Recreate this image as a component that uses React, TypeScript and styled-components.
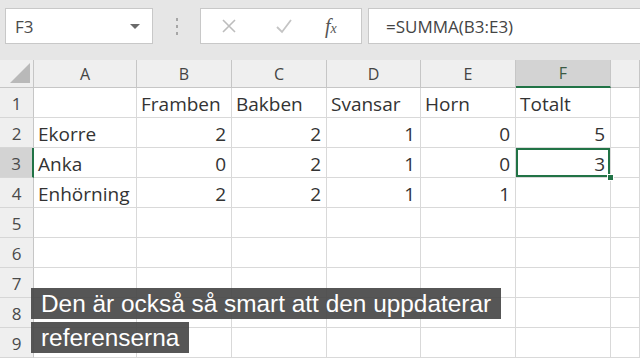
import styled, { createGlobalStyle } from "styled-components";

const GlobalStyle = createGlobalStyle`
  html, body {
    margin: 0;
    padding: 0;
    background: #ffffff;
    overflow: hidden;
  }
  * {
    box-sizing: border-box;
  }
`;

const columns = ["A", "B", "C", "D", "E", "F", ""];
const selectedCol = 5;
const selectedRow = 3;

type Cell = { text: string; num?: boolean };

const data: Cell[][] = [
  [{ text: "" }, { text: "Framben" }, { text: "Bakben" }, { text: "Svansar" }, { text: "Horn" }, { text: "Totalt" }],
  [{ text: "Ekorre" }, { text: "2", num: true }, { text: "2", num: true }, { text: "1", num: true }, { text: "0", num: true }, { text: "5", num: true }],
  [{ text: "Anka" }, { text: "0", num: true }, { text: "2", num: true }, { text: "1", num: true }, { text: "0", num: true }, { text: "3", num: true }],
  [{ text: "Enhörning" }, { text: "2", num: true }, { text: "2", num: true }, { text: "1", num: true }, { text: "1", num: true }, { text: "" }],
];

const rowCount = 9;

export default function App() {
  return (
    <Page>
      <GlobalStyle />
      <FormulaBar>
        <NameBox>
          <span>F3</span>
          <DropArrow />
        </NameBox>
        <Grip>
          <i />
          <i />
          <i />
        </Grip>
        <ButtonBox>
          <ToolIcon>
            <svg width="16" height="16" viewBox="0 0 16 16">
              <path d="M2 2 L14 14 M14 2 L2 14" stroke="#bdbdbd" strokeWidth="1.6" fill="none" />
            </svg>
          </ToolIcon>
          <ToolIcon>
            <svg width="18" height="16" viewBox="0 0 18 16">
              <path d="M2 9 L7 14 L16 2" stroke="#c4c4c4" strokeWidth="1.8" fill="none" />
            </svg>
          </ToolIcon>
          <FxLabel>
            f<sub>x</sub>
          </FxLabel>
        </ButtonBox>
        <FormulaInput>=SUMMA(B3:E3)</FormulaInput>
      </FormulaBar>

      <Sheet>
        <Corner>
          <svg width="22" height="22" viewBox="0 0 22 22">
            <path d="M21 1 L21 21 L1 21 Z" fill="#b9b9b9" />
          </svg>
        </Corner>
        {columns.map((c, i) => (
          <ColHeader key={c + i} $active={i === selectedCol}>
            {c}
          </ColHeader>
        ))}
        {Array.from({ length: rowCount }, (_, r) => {
          const rowNum = r + 1;
          const rowData = data[r] || [];
          return [
            <RowHeader key={"h" + rowNum} $active={rowNum === selectedRow}>
              {rowNum}
            </RowHeader>,
            ...columns.map((_, ci) => {
              const cell = rowData[ci];
              const selected = rowNum === selectedRow && ci === selectedCol;
              return (
                <GridCell key={rowNum + "-" + ci} $num={!!cell?.num} $selected={selected}>
                  {cell?.text}
                  {selected && <FillHandle />}
                </GridCell>
              );
            }),
          ];
        })}
        <Subtitles>
          <SubLine>Den är också så smart att den uppdaterar</SubLine>
          <SubLine>referenserna</SubLine>
        </Subtitles>
      </Sheet>
    </Page>
  );
}

const Page = styled.div`
  width: 640px;
  height: 360px;
  overflow: hidden;
  display: flex;
  flex-direction: column;
  background: #ffffff;
`;

const FormulaBar = styled.div`
  height: 60px;
  flex-shrink: 0;
  display: flex;
  align-items: flex-start;
  padding: 8px 0 0 5px;
  background: #e6e6e6;
  font-family: "Open Sans", "Liberation Sans", sans-serif;
`;

const NameBox = styled.div`
  width: 148px;
  height: 36px;
  display: flex;
  align-items: center;
  justify-content: space-between;
  padding: 0 12px 0 9px;
  background: #ffffff;
  border: 1px solid #c8c8c8;
  font-size: 17px;
  color: #4a4a4a;
`;

const DropArrow = styled.span`
  width: 0;
  height: 0;
  border-left: 5px solid transparent;
  border-right: 5px solid transparent;
  border-top: 5px solid #6a6a6a;
`;

const Grip = styled.div`
  width: 47px;
  height: 36px;
  display: flex;
  flex-direction: column;
  align-items: center;
  justify-content: center;
  gap: 4px;

  i {
    width: 2px;
    height: 3px;
    background: #a6a6a6;
  }
`;

const ButtonBox = styled.div`
  width: 162px;
  height: 36px;
  display: flex;
  align-items: center;
  padding-left: 20px;
  gap: 36px;
  background: #ffffff;
  border: 1px solid #c8c8c8;
`;

const ToolIcon = styled.span`
  display: flex;
  align-items: center;
  width: 18px;
`;

const FxLabel = styled.span`
  font-family: "Liberation Serif", serif;
  font-style: italic;
  font-size: 20px;
  color: #555555;
  margin-left: -4px;

  sub {
    font-size: 14px;
    vertical-align: baseline;
  }
`;

const FormulaInput = styled.div`
  flex: 1;
  height: 36px;
  margin-left: 6px;
  display: flex;
  align-items: center;
  padding-left: 17px;
  background: #ffffff;
  border: 1px solid #c8c8c8;
  border-right: none;
  font-size: 17px;
  color: #444444;
`;

const Sheet = styled.div`
  position: relative;
  flex: 1;
  display: grid;
  grid-template-columns: 34px 103px 95px 95px 94px 95px 95px 1fr;
  grid-template-rows: 28px repeat(9, 30px) 1fr;
  font-family: "Open Sans", "Liberation Sans", sans-serif;
`;

const Corner = styled.div`
  display: flex;
  align-items: flex-end;
  justify-content: flex-end;
  padding: 0 2px 3px 0;
  background: #efefef;
  border-right: 1px solid #c6c6c6;
  border-bottom: 1px solid #c6c6c6;
`;

const ColHeader = styled.div<{ $active: boolean }>`
  display: flex;
  align-items: center;
  justify-content: center;
  background: ${({ $active }) => ($active ? "#d3d3d3" : "#efefef")};
  border-right: 1px solid #c6c6c6;
  border-bottom: ${({ $active }) => ($active ? "2px solid #217346" : "1px solid #c6c6c6")};
  font-size: 16px;
  color: ${({ $active }) => ($active ? "#3a5a44" : "#444444")};
`;

const RowHeader = styled.div<{ $active: boolean }>`
  display: flex;
  align-items: center;
  justify-content: center;
  padding-top: 2px;
  background: ${({ $active }) => ($active ? "#d3d3d3" : "#efefef")};
  border-right: ${({ $active }) => ($active ? "2px solid #217346" : "1px solid #c6c6c6")};
  border-bottom: 1px solid #d6d6d6;
  font-size: 17px;
  color: #4a4a4a;
`;

const GridCell = styled.div<{ $num: boolean; $selected: boolean }>`
  position: relative;
  display: flex;
  align-items: center;
  justify-content: ${({ $num }) => ($num ? "flex-end" : "flex-start")};
  padding: 3px 5px 0 4px;
  border-right: 1px solid #d9d9d9;
  border-bottom: 1px solid #d9d9d9;
  font-size: 19px;
  color: #333333;
  white-space: nowrap;
  box-shadow: ${({ $selected }) => ($selected ? "inset 0 0 0 2px #217346" : "none")};
`;

const FillHandle = styled.span`
  position: absolute;
  right: -4px;
  bottom: -4px;
  width: 7px;
  height: 7px;
  background: #217346;
  border: 1px solid #ffffff;
  z-index: 2;
`;

const Subtitles = styled.div`
  position: absolute;
  left: 31px;
  top: 228px;
  display: flex;
  flex-direction: column;
  align-items: flex-start;
  gap: 3px;
  z-index: 3;
`;

const SubLine = styled.div`
  height: 31px;
  display: flex;
  align-items: center;
  padding: 0 10px;
  background: rgba(72, 72, 72, 0.92);
  color: #ffffff;
  font-family: "Liberation Sans", Arial, sans-serif;
  font-size: 24.4px;
  white-space: nowrap;
`;
